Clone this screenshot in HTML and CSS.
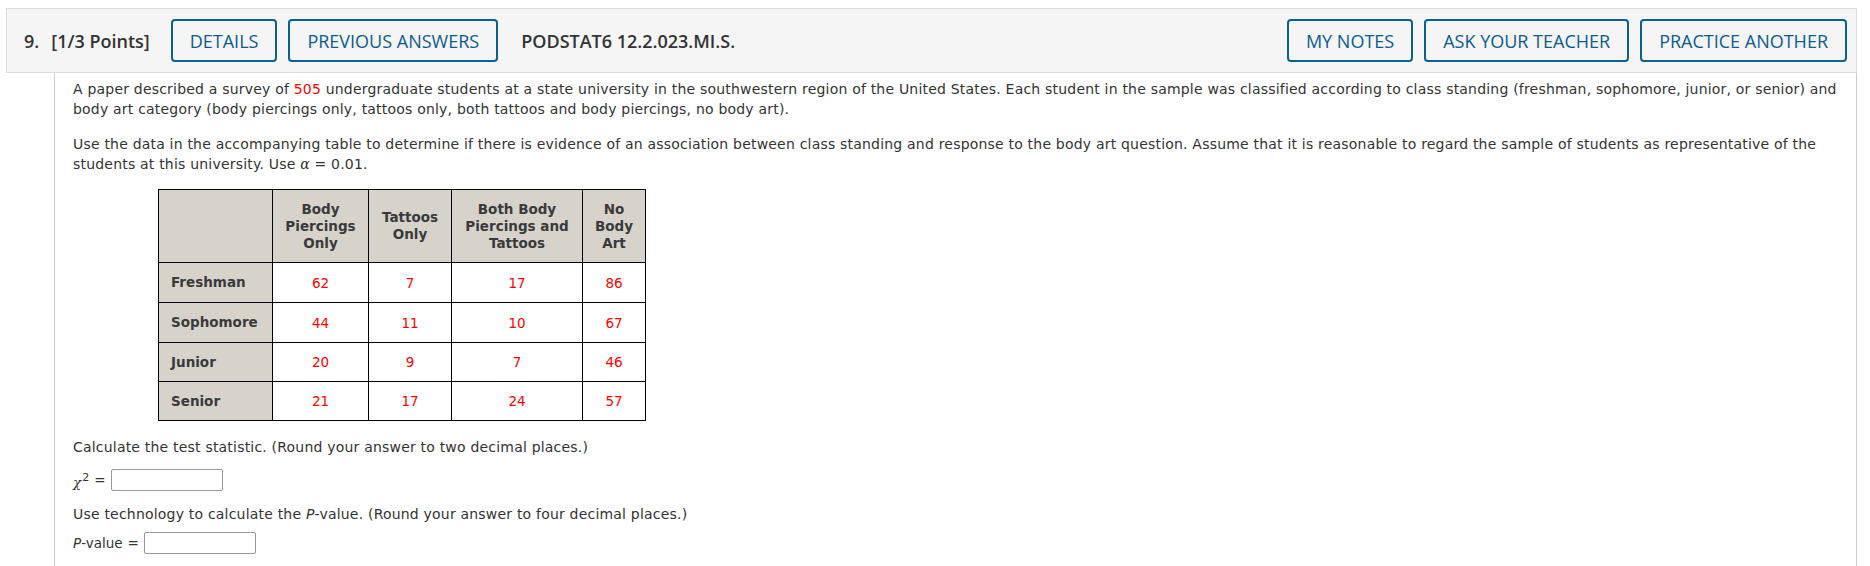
FILE: index.html
```html
<!DOCTYPE html>
<html>
<head>
<meta charset="utf-8">
<link rel="stylesheet" href="styles.css">
</head>
<body>
<div class="question">
  <div class="qhead">
    <div class="qnum"><span class="num">9.</span><span>[1/3 Points]</span></div>
    <button class="btn">DETAILS</button>
    <button class="btn">PREVIOUS ANSWERS</button>
    <div class="code">PODSTAT6 12.2.023.MI.S.</div>
    <div class="spacer"></div>
    <button class="btn">MY NOTES</button>
    <button class="btn">ASK YOUR TEACHER</button>
    <button class="btn">PRACTICE ANOTHER</button>
  </div>
  <div class="qbody">
    <p>A paper described a survey of <span class="red">505</span> undergraduate students at a state university in the southwestern region of the United States. Each student in the sample was classified according to class standing (freshman, sophomore, junior, or senior) and body art category (body piercings only, tattoos only, both tattoos and body piercings, no body art).</p>
    <p>Use the data in the accompanying table to determine if there is evidence of an association between class standing and response to the body art question. Assume that it is reasonable to regard the sample of students as representative of the students at this university. Use <span class="alpha">α</span> = 0.01.</p>
    <table class="data">
      <colgroup>
        <col class="c0"><col class="c1"><col class="c2"><col class="c3"><col class="c4">
      </colgroup>
      <tr class="hrow">
        <th></th>
        <th>Body<br>Piercings<br>Only</th>
        <th>Tattoos<br>Only</th>
        <th>Both Body<br>Piercings and<br>Tattoos</th>
        <th>No<br>Body<br>Art</th>
      </tr>
      <tr class="r1"><th class="rl">Freshman</th><td>62</td><td>7</td><td>17</td><td>86</td></tr>
      <tr class="r2"><th class="rl">Sophomore</th><td>44</td><td>11</td><td>10</td><td>67</td></tr>
      <tr class="r3"><th class="rl">Junior</th><td>20</td><td>9</td><td>7</td><td>46</td></tr>
      <tr class="r4"><th class="rl">Senior</th><td>21</td><td>17</td><td>24</td><td>57</td></tr>
    </table>
    <p class="after">Calculate the test statistic. (Round your answer to two decimal places.)</p>
    <div class="ans"><span class="chi">χ<sup>2</sup></span> = <span class="box"></span></div>
    <p class="q2">Use technology to calculate the <i>P</i>-value. (Round your answer to four decimal places.)</p>
    <div class="ans"><span><i>P</i>-value</span> = <span class="box"></span></div>
  </div>
</div>
</body>
</html>
```
FILE: styles.css
```css
html, body {
  margin: 0;
  padding: 0;
  background: #fff;
}
body {
  font-family: "DejaVu Sans", Verdana, sans-serif;
  font-size: 13px;
  color: #333;
}
.question {
  margin: 8px 13px 0 6px;
}
.qhead {
  display: flex;
  align-items: center;
  gap: 11px;
  height: 63px;
  padding: 0 9px 0 17px;
  background: #f5f5f5;
  border: 1px solid #ddd;
  font-family: "Open Sans", sans-serif;
  font-size: 18px;
  font-weight: 600;
  color: #333;
}
.qnum {
  display: flex;
  gap: 12px;
  margin-right: 10px;
  font-size: 18px;
}
.btn {
  height: 43px;
  padding: 0 17px;
  background: transparent;
  border: 2px solid #0a6196;
  border-radius: 4px;
  font-family: "Open Sans", sans-serif;
  font-size: 18px;
  font-weight: 500;
  color: #0b5c8f;
}
.code {
  margin-left: 12px;
  font-size: 18px;
}
.spacer {
  flex: 1;
}
.qbody {
  margin-left: 48px;
  border-left: 1px solid #ccc;
  border-right: 1px solid #ccc;
  padding: 6px 18px 20px 18px;
  min-height: 470px;
  line-height: 20px;
}
.qbody p {
  margin: 0 0 15px 0;
  font-size: 14px;
  letter-spacing: 0.2px;
}
.red {
  color: #ff0000;
}
.alpha {
  font-family: "DejaVu Serif", serif;
  font-style: italic;
}
.data {
  border-collapse: collapse;
  margin-left: 85px;
  width: 487px;
  table-layout: fixed;
  color: #ff0000;
  font-size: 13.5px;
}
.c0 { width: 114px; }
.c1 { width: 96px; }
.c2 { width: 83px; }
.c3 { width: 131px; }
.c4 { width: 63px; }
.data th, .data td {
  border: 1px solid #000;
  text-align: center;
  padding: 0;
}
.data th {
  background: #d7d3ca;
  color: #3a3a3a;
  font-weight: bold;
  line-height: 17px;
}
.data th.rl {
  text-align: left;
  padding-left: 12px;
}
.hrow { height: 73px; }
.r1, .r2 { height: 40px; }
.r3, .r4 { height: 39px; }
.after {
  margin-top: 16px !important;
  margin-bottom: 12px !important;
}
.ans {
  display: flex;
  align-items: center;
  gap: 5px;
  height: 22px;
  margin-bottom: 13px;
  font-size: 13.5px;
}
.chi {
  font-family: "DejaVu Serif", serif;
  font-style: italic;
  position: relative;
  top: 2px;
}
.chi sup {
  font-family: "DejaVu Sans", sans-serif;
  font-style: normal;
  font-size: 11px;
  vertical-align: 6px;
  line-height: 0;
  margin-left: 1px;
}
.box {
  display: inline-block;
  width: 110px;
  height: 20px;
  border: 1px solid #999;
  border-radius: 2px;
  background: #fff;
}
.q2 {
  margin-bottom: 8px !important;
}
```
